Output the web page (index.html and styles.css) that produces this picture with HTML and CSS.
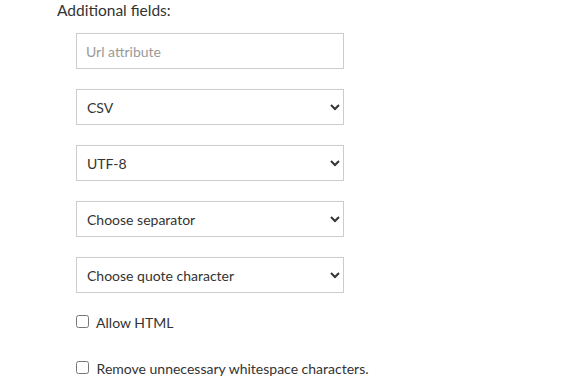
FILE: index.html
```html
<!DOCTYPE html>
<html>
<head>
<meta charset="utf-8">
<link rel="stylesheet" href="styles.css">
</head>
<body>
<div class="page">
  <div class="title">Additional fields:</div>
  <div class="fields">
    <input class="field" type="text" placeholder="Url attribute">
    <select class="field"><option>CSV</option></select>
    <select class="field"><option>UTF-8</option></select>
    <select class="field"><option>Choose separator</option></select>
    <select class="field"><option>Choose quote character</option></select>
  </div>
  <div class="checks">
    <label class="check"><input type="checkbox"> Allow HTML</label>
    <label class="check"><input type="checkbox"> Remove unnecessary whitespace characters.</label>
  </div>
</div>
</body>
</html>
```
FILE: styles.css
```css
html, body { margin: 0; padding: 0; background: #fff; }
body { font-family: Lato, "Liberation Sans", sans-serif; color: #333; }
.page { padding: 0 0 0 57px; }
.title { font-size: 15.5px; line-height: 20px; height: 20px; color: #333; padding-top: 0; }
.fields { display: flex; flex-direction: column; gap: 20px; padding: 13px 0 0 19px; }
.field {
  box-sizing: border-box; width: 268px; height: 36px; margin: 0;
  border: 1px solid #ccc; border-radius: 0; background: #fff;
  font-family: inherit; font-size: 14px; color: #333; padding: 0 9px;
  outline: none;
}
.field::placeholder { color: #999; }
select.field { padding-left: 6px; }
.checks { display: flex; flex-direction: column; gap: 28px; padding: 21px 0 0 19px; }
.check { display: block; font-size: 14px; line-height: 18px; color: #333; }
.check input { margin: 0 4px 0 0; width: 13px; height: 13px; vertical-align: baseline; }
```
